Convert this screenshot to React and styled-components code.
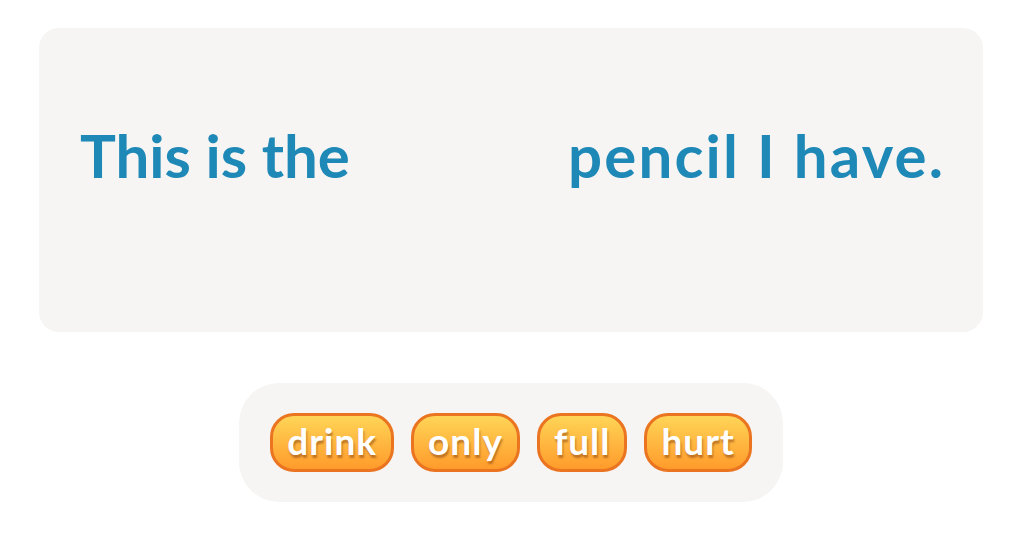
import React from 'react';
import styled, { createGlobalStyle } from 'styled-components';

const Global = createGlobalStyle`
  body {
    margin: 0;
    background: #ffffff;
    font-family: Lato, "Open Sans", sans-serif;
  }
`

const Page = styled.div`
  width: 1022px;
  height: 533px;
  padding-top: 28px;
  box-sizing: border-box;
  display: flex;
  flex-direction: column;
  align-items: center;
`

const Card = styled.div`
  width: 944px;
  height: 304px;
  background: #f6f5f4;
  border-radius: 20px;
  box-sizing: border-box;
  padding: 0 0 50px 41px;
  display: flex;
  align-items: center;
`

const Sentence = styled.div`
  display: flex;
  align-items: baseline;
  font-size: 60px;
  font-weight: 700;
  color: #1e88b6;
  white-space: nowrap;
`

const Segment = styled.span`
  letter-spacing: ${p => p.$spacing || 0}px;
`

const Blank = styled.span`
  display: inline-block;
  width: 218px;
`

const Tray = styled.div`
  margin-top: 51px;
  width: 544px;
  height: 119px;
  box-sizing: border-box;
  background: #f6f5f4;
  border-radius: 40px;
  display: flex;
  justify-content: center;
  align-items: center;
  gap: 17px;
`

const Chip = styled.button`
  height: 59px;
  padding: 0 14px 4px;
  box-sizing: border-box;
  border: 3px solid #ea7420;
  border-radius: 24px;
  background: linear-gradient(#ffd557, #ff9b2b);
  color: #ffffff;
  font-family: Lato, sans-serif;
  font-weight: 700;
  font-size: 37px;
  letter-spacing: 1px;
  text-shadow: 1px 3px 2px rgba(140, 70, 20, 0.55);
  display: flex;
  align-items: center;
  cursor: pointer;
`

const words = ['drink', 'only', 'full', 'hurt'];

export default function App() {
  return (
    <Page>
      <Global />
      <Card>
        <Sentence>
          <Segment>This is the</Segment>
          <Blank />
          <Segment $spacing={2.2}>pencil I have.</Segment>
        </Sentence>
      </Card>
      <Tray>
        {words.map(w => (
          <Chip key={w}>{w}</Chip>
        ))}
      </Tray>
    </Page>
  );
}
